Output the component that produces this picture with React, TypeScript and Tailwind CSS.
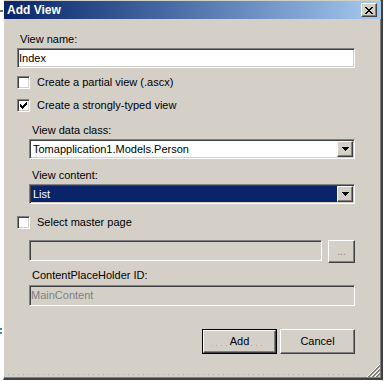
import React from "react";

const sunken =
  "border border-t-[#808080] border-l-[#808080] border-r-white border-b-white shadow-[inset_1px_1px_0_#404040,inset_-1px_-1px_0_#d4d0c8]";
const raised =
  "border border-t-white border-l-white border-r-[#404040] border-b-[#404040] shadow-[inset_-1px_-1px_0_#808080,inset_1px_1px_0_#d4d0c8]";

function Check() {
  return (
    <svg width="7" height="7" viewBox="0 0 7 7" shapeRendering="crispEdges">
      <path
        fill="#000"
        d="M6 0h1v1h-1z M5 1h2v1h-2z M0 2h1v1h-1z M4 2h3v1h-3z M0 3h2v1h-2z M3 3h3v1h-3z M0 4h5v1h-5z M1 5h3v1h-3z M2 6h1v1h-1z"
      />
    </svg>
  );
}

function Checkbox({ checked, label, className }: { checked?: boolean; label: string; className?: string }) {
  return (
    <div className={`flex h-[13px] items-center gap-[7px] ${className ?? ""}`}>
      <div className={`flex h-[13px] w-[13px] items-center justify-center bg-white ${sunken}`}>
        {checked ? <Check /> : null}
      </div>
      <span>{label}</span>
    </div>
  );
}

function Arrow() {
  return (
    <svg width="7" height="4" viewBox="0 0 7 4" shapeRendering="crispEdges">
      <path fill="#000" d="M0 0h7v1h-7z M1 1h5v1h-5z M2 2h3v1h-3z M3 3h1v1h-1z" />
    </svg>
  );
}

function Select({ value, selected, className }: { value: string; selected?: boolean; className?: string }) {
  return (
    <div className={`flex h-[20px] w-[326px] bg-white ${sunken} ${className ?? ""}`}>
      <div
        className={`flex flex-1 items-center pl-[2px] ${
          selected ? "bg-[#0a246a] text-white" : "text-black"
        } m-[1px] mr-0`}
      >
        {value}
      </div>
      <div className={`m-[1px] ml-0 flex h-[16px] w-[16px] items-center justify-center bg-[#d4d0c8] ${raised}`}>
        <Arrow />
      </div>
    </div>
  );
}

const dots =
  "bg-[repeating-linear-gradient(90deg,#9db6bd_0px,#9db6bd_1px,transparent_1px,transparent_5px)]";

export default function App() {
  return (
    <div className="flex min-h-screen bg-white font-['Liberation_Sans',Arial,sans-serif] text-[11px] leading-[13px] text-black">
      <div className="flex w-[3px] flex-col">
        <div className="mt-[10px] h-[2px] w-[3px] bg-[#707070]" />
        <div className="mt-[316px] h-[2px] w-[2px] bg-[#3a8ac0]" />
        <div className="mt-[2px] h-[2px] w-[2px] bg-[#3a8ac0]" />
      </div>
      <div className="relative flex h-[380px] w-[380px] flex-col border-l border-r-2 border-b-2 border-l-white border-r-[#404040] border-b-[#404040] bg-[#d4d0c8] pt-[1px] shadow-[inset_-1px_-1px_0_#808080]">
        {/* Title bar */}
        <div className="flex h-[18px] items-center justify-between bg-linear-to-r from-[#0a246a] to-[#a6caf0] pl-[3px] pr-[4px]">
          <span className="text-[12px] font-bold leading-[14px] text-white">Add View</span>
          <div className={`flex h-[14px] w-[16px] items-center justify-center bg-[#d4d0c8] ${raised}`}>
            <svg width="8" height="7" viewBox="0 0 8 7" shapeRendering="crispEdges">
              <path
                fill="#000"
                d="M0 0h2v1h-2z M6 0h2v1h-2z M1 1h2v1h-2z M5 1h2v1h-2z M2 2h4v1h-4z M3 3h2v1h-2z M2 4h4v1h-4z M1 5h2v1h-2z M5 5h2v1h-2z M0 6h2v1h-2z M6 6h2v1h-2z"
              />
            </svg>
          </div>
        </div>

        {/* Content */}
        <div className="flex flex-col">
          <span className="ml-[16px] mt-[14px] h-[13px]">View name:</span>
          <div className={`ml-[13px] mt-[2px] flex h-[20px] w-[338px] items-center bg-white pl-[1px] ${sunken}`}>
            Index
          </div>

          <Checkbox className="ml-[13px] mt-[8px]" label="Create a partial view (.ascx)" />
          <Checkbox className="ml-[13px] mt-[10px]" checked label="Create a strongly-typed view" />

          <span className="ml-[28px] mt-[12px] h-[13px]">View data class:</span>
          <Select className="ml-[25px] mt-[2px]" value="Tomapplication1.Models.Person" />

          <span className="ml-[28px] mt-[10px] h-[13px]">View content:</span>
          <Select className="ml-[25px] mt-[2px]" value="List" selected />

          <Checkbox className="ml-[13px] mt-[12px]" label="Select master page" />

          <div className="ml-[25px] mt-[11px] flex h-[23px] items-start gap-[6px]">
            <div className={`h-[21px] w-[293px] bg-[#d4d0c8] ${sunken}`} />
            <div
              className={`flex h-[23px] w-[27px] items-center justify-center bg-[#d4d0c8] text-[10px] text-[#808080] ${raised}`}
            >
              ...
            </div>
          </div>

          <span className="ml-[28px] mt-[6px] h-[13px]">ContentPlaceHolder ID:</span>
          <div
            className={`ml-[25px] mt-[3px] flex h-[21px] w-[326px] items-center bg-[#d4d0c8] pl-[1px] text-[#808080] ${sunken}`}
          >
            MainContent
          </div>

          <div className="ml-[198px] mt-[23px] flex h-[25px] gap-[3px]">
            <div className="h-[25px] w-[75px] border border-black">
              <div className={`relative flex h-full w-full items-center justify-center bg-[#d4d0c8] ${raised}`}>
                Add
                <div className={`absolute bottom-[6px] left-[7px] right-[9px] h-[1px] ${dots}`} />
              </div>
            </div>
            <div className={`flex h-[25px] w-[75px] items-center justify-center bg-[#d4d0c8] ${raised}`}>
              Cancel
            </div>
          </div>

          <div className={`ml-[4px] mt-[20px] h-[1px] w-[354px] ${dots}`} />
        </div>

        {/* Size grip */}
        <svg
          className="absolute bottom-[1px] right-[1px]"
          width="13"
          height="13"
          viewBox="0 0 13 13"
          shapeRendering="crispEdges"
        >
          {[0, 4, 8].map((o) => (
            <g key={o}>
              <line x1={o} y1={13} x2={13} y2={o} stroke="#ffffff" strokeWidth="1" />
              <line x1={o + 1} y1={13} x2={13} y2={o + 1} stroke="#808080" strokeWidth="1" />
              <line x1={o + 2} y1={13} x2={13} y2={o + 2} stroke="#808080" strokeWidth="1" />
            </g>
          ))}
        </svg>
      </div>
    </div>
  );
}
